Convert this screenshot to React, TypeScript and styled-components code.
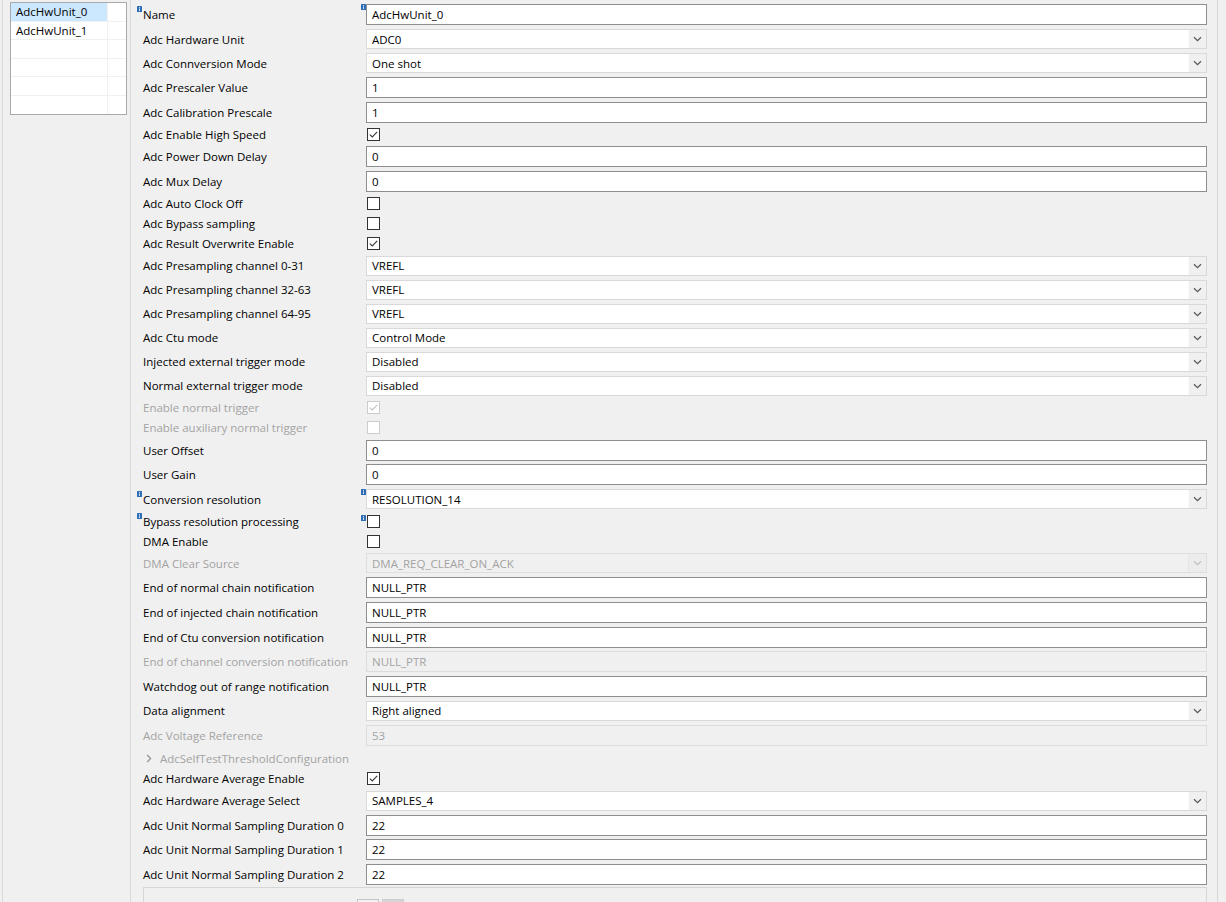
import React from "react";
import styled, { createGlobalStyle, css } from "styled-components";

type Kind = "text" | "select" | "check" | "tree";

interface IRow {
  label: string;
  kind: Kind;
  value?: string;
  checked?: boolean;
  disabled?: boolean;
  info?: boolean;
  fieldInfo?: boolean;
}

const rows: IRow[] = [
  { label: "Name", kind: "text", value: "AdcHwUnit_0", info: true, fieldInfo: true },
  { label: "Adc Hardware Unit", kind: "select", value: "ADC0" },
  { label: "Adc Connversion Mode", kind: "select", value: "One shot" },
  { label: "Adc Prescaler Value", kind: "text", value: "1" },
  { label: "Adc Calibration Prescale", kind: "text", value: "1" },
  { label: "Adc Enable High Speed", kind: "check", checked: true },
  { label: "Adc Power Down Delay", kind: "text", value: "0" },
  { label: "Adc Mux Delay", kind: "text", value: "0" },
  { label: "Adc Auto Clock Off", kind: "check" },
  { label: "Adc Bypass sampling", kind: "check" },
  { label: "Adc Result Overwrite Enable", kind: "check", checked: true },
  { label: "Adc Presampling channel 0-31", kind: "select", value: "VREFL" },
  { label: "Adc Presampling channel 32-63", kind: "select", value: "VREFL" },
  { label: "Adc Presampling channel 64-95", kind: "select", value: "VREFL" },
  { label: "Adc Ctu mode", kind: "select", value: "Control Mode" },
  { label: "Injected external trigger mode", kind: "select", value: "Disabled" },
  { label: "Normal external trigger mode", kind: "select", value: "Disabled" },
  { label: "Enable normal trigger", kind: "check", checked: true, disabled: true },
  { label: "Enable auxiliary normal trigger", kind: "check", disabled: true },
  { label: "User Offset", kind: "text", value: "0" },
  { label: "User Gain", kind: "text", value: "0" },
  { label: "Conversion resolution", kind: "select", value: "RESOLUTION_14", info: true, fieldInfo: true },
  { label: "Bypass resolution processing", kind: "check", info: true, fieldInfo: true },
  { label: "DMA Enable", kind: "check" },
  { label: "DMA Clear Source", kind: "select", value: "DMA_REQ_CLEAR_ON_ACK", disabled: true },
  { label: "End of normal chain notification", kind: "text", value: "NULL_PTR" },
  { label: "End of injected chain notification", kind: "text", value: "NULL_PTR" },
  { label: "End of Ctu conversion notification", kind: "text", value: "NULL_PTR" },
  { label: "End of channel conversion notification", kind: "text", value: "NULL_PTR", disabled: true },
  { label: "Watchdog out of range notification", kind: "text", value: "NULL_PTR" },
  { label: "Data alignment", kind: "select", value: "Right aligned" },
  { label: "Adc Voltage Reference", kind: "text", value: "53", disabled: true },
  { label: "AdcSelfTestThresholdConfiguration", kind: "tree" },
  { label: "Adc Hardware Average Enable", kind: "check", checked: true },
  { label: "Adc Hardware Average Select", kind: "select", value: "SAMPLES_4" },
  { label: "Adc Unit Normal Sampling Duration 0", kind: "text", value: "22" },
  { label: "Adc Unit Normal Sampling Duration 1", kind: "text", value: "22" },
  { label: "Adc Unit Normal Sampling Duration 2", kind: "text", value: "22" },
];

const units = ["AdcHwUnit_0", "AdcHwUnit_1", "", "", "", ""];

const rowHeights: Record<Kind, string> = {
  text: "24.7px",
  select: "24px",
  check: "20px",
  tree: "21.5px",
};

const GlobalStyle = createGlobalStyle`
  html, body {
    margin: 0;
    padding: 0;
    overflow: hidden;
    background: #f0f0f0;
  }
  body {
    font-family: "Open Sans", "Noto Sans", sans-serif;
    font-size: 11.5px;
    color: #000;
  }
`;

const Window = styled.div`
  display: flex;
  height: 100vh;
  background: #f0f0f0;
`;

const UnitPane = styled.div`
  margin-left: 2px;
  width: 129px;
  border-left: 1px solid #dadada;
  border-right: 1px solid #dadada;
  padding: 2px 0 0 7px;
  box-sizing: border-box;
`;

const UnitList = styled.div`
  width: 117px;
  border: 1px solid #a9a9a9;
  background: #fff;
  box-sizing: border-box;
`;

const UnitRow = styled.div`
  display: grid;
  grid-template-columns: 97px 1fr;
  height: 18.5px;
  border-bottom: 1px solid #f0f0f0;
  box-sizing: border-box;
  &:last-child {
    border-bottom: none;
  }
`;

const UnitCell = styled.div<{ $selected?: boolean }>`
  padding-left: 5px;
  line-height: 17.5px;
  border-right: 1px solid #f0f0f0;
  background: ${(p) => (p.$selected ? "#cce8ff" : "transparent")};
`;

const EditorPane = styled.div`
  width: 1087px;
  border-right: 1px solid #d8d8d8;
  padding: 2.5px 10px 0 12px;
  box-sizing: border-box;
`;

const Row = styled.div<{ $kind: Kind }>`
  display: grid;
  grid-template-columns: 223px 841px;
  align-items: center;
  height: ${(p) => rowHeights[p.$kind]};
`;

const Label = styled.div<{ $disabled?: boolean }>`
  position: relative;
  white-space: nowrap;
  color: ${(p) => (p.$disabled ? "#a3a3a3" : "#000")};
`;

const TreeLabel = styled.div`
  display: flex;
  align-items: center;
  gap: 8px;
  padding-left: 3px;
  color: #a3a3a3;
  white-space: nowrap;
`;

const Field = styled.div`
  position: relative;
  display: flex;
  align-items: center;
`;

const InfoMark = styled.svg<{ $field?: boolean }>`
  position: absolute;
  left: ${(p) => (p.$field ? "-5px" : "-6px")};
  top: ${(p) => (p.$field ? "0px" : "-1px")};
`;

const fieldBox = css`
  height: 21px;
  width: 100%;
  box-sizing: border-box;
  display: flex;
  align-items: center;
  padding-left: 5px;
  white-space: nowrap;
`;

const TextBox = styled.div<{ $disabled?: boolean }>`
  ${fieldBox}
  background: ${(p) => (p.$disabled ? "#f0f0f0" : "#fff")};
  border: 1px solid ${(p) => (p.$disabled ? "#dcdcdc" : "#8e8e8e")};
  color: ${(p) => (p.$disabled ? "#a3a3a3" : "#000")};
`;

const SelectBox = styled.div<{ $disabled?: boolean }>`
  ${fieldBox}
  height: 20px;
  padding-right: 0;
  background: ${(p) => (p.$disabled ? "#f0f0f0" : "#fff")};
  border: 1px solid ${(p) => (p.$disabled ? "#dedede" : "#d9d9d9")};
  color: ${(p) => (p.$disabled ? "#a3a3a3" : "#000")};
`;

const SelectText = styled.span`
  flex: 1;
`;

const Chevron = styled.div<{ $disabled?: boolean }>`
  width: 17px;
  height: 100%;
  display: flex;
  align-items: center;
  justify-content: center;
  background: ${(p) => (p.$disabled ? "#ececec" : "#f0f0f0")};
  border-left: 1px solid ${(p) => (p.$disabled ? "#e6e6e6" : "#fafafa")};
`;

const CheckBox = styled.div<{ $disabled?: boolean }>`
  width: 13px;
  height: 13px;
  margin-left: 1px;
  box-sizing: border-box;
  border: 1px solid ${(p) => (p.$disabled ? "#cccccc" : "#333")};
  background: #fff;
  display: flex;
  align-items: center;
  justify-content: center;
`;

const GroupBox = styled.div`
  height: 40px;
  border: 1px solid #d6d6d6;
  display: flex;
  align-items: flex-start;
  padding: 11px 0 0 213px;
  gap: 3px;
`;

const SmallButton = styled.div<{ $filled?: boolean }>`
  width: 22px;
  height: 20px;
  box-sizing: border-box;
  border: 1px solid ${(p) => (p.$filled ? "#cdcdcd" : "#c4c4c4")};
  background: ${(p) => (p.$filled ? "#d6d6d6" : "#f3f3f3")};
`;

function Info({ field }: { field?: boolean }) {
  return (
    <InfoMark $field={field} width="5" height="6" viewBox="0 0 5 6">
      <rect x="0" y="0" width="5" height="6" rx="0.6" fill="#2f6db5" />
      <rect x="2" y="1" width="1" height="1" fill="#cfe1f7" />
      <rect x="2" y="2.5" width="1" height="2.5" fill="#cfe1f7" />
    </InfoMark>
  );
}

function FieldControl({ row }: { row: IRow }) {
  if (row.kind === "check") {
    const color = row.disabled ? "#c3c3c3" : "#3a3a3a";
    return (
      <CheckBox $disabled={row.disabled}>
        {row.checked && (
          <svg width="11" height="11" viewBox="0 0 11 11">
            <path d="M1.8 5.6 L4.3 8 L9.2 2.8" fill="none" stroke={color} strokeWidth="1.1" />
          </svg>
        )}
      </CheckBox>
    );
  }
  if (row.kind === "select") {
    return (
      <SelectBox $disabled={row.disabled}>
        <SelectText>{row.value}</SelectText>
        <Chevron $disabled={row.disabled}>
          <svg width="9" height="6" viewBox="0 0 9 6">
            <path
              d="M1 1.2 L4.5 4.6 L8 1.2"
              fill="none"
              stroke={row.disabled ? "#c0c0c0" : "#5a5a5a"}
              strokeWidth="1.3"
            />
          </svg>
        </Chevron>
      </SelectBox>
    );
  }
  return <TextBox $disabled={row.disabled}>{row.value}</TextBox>;
}

export default function App() {
  return (
    <>
      <GlobalStyle />
      <Window>
        <UnitPane>
          <UnitList>
            {units.map((u, i) => (
              <UnitRow key={i}>
                <UnitCell $selected={i === 0}>{u}</UnitCell>
                <div />
              </UnitRow>
            ))}
          </UnitList>
        </UnitPane>
        <EditorPane>
          {rows.map((row) =>
            row.kind === "tree" ? (
              <Row key={row.label} $kind="tree">
                <TreeLabel>
                  <svg width="6" height="9" viewBox="0 0 6 9">
                    <path d="M1.2 1 L4.6 4.5 L1.2 8" fill="none" stroke="#9a9a9a" strokeWidth="1.4" />
                  </svg>
                  {row.label}
                </TreeLabel>
                <div />
              </Row>
            ) : (
              <Row key={row.label} $kind={row.kind}>
                <Label $disabled={row.disabled}>
                  {row.info && <Info />}
                  {row.label}
                </Label>
                <Field>
                  {row.fieldInfo && <Info field />}
                  <FieldControl row={row} />
                </Field>
              </Row>
            )
          )}
          <GroupBox>
            <SmallButton />
            <SmallButton $filled />
          </GroupBox>
        </EditorPane>
      </Window>
    </>
  );
}
